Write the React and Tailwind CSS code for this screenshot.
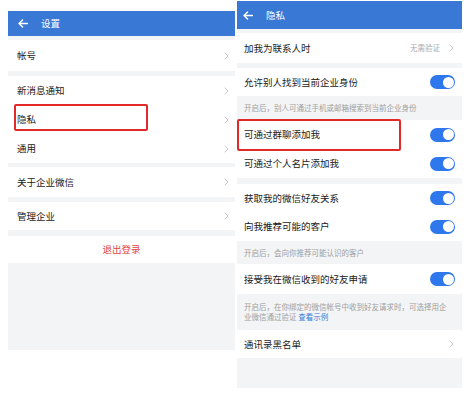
import React from "react";

const FONT = { fontFamily: '"Noto Sans CJK SC", "Noto Sans", sans-serif' };

function BackArrow() {
  return (
    <svg width="10" height="9" viewBox="0 0 10 9" fill="none">
      <path d="M9.5 4.5H1.2M4.6 1L1 4.5L4.6 8" stroke="white" strokeWidth="1.4" strokeLinecap="round" strokeLinejoin="round" />
    </svg>
  );
}

function Chevron() {
  return (
    <svg width="5" height="8" viewBox="0 0 5 8" fill="none">
      <path d="M1 1L4 4L1 7" stroke="#c7c7cc" strokeWidth="1" strokeLinecap="round" strokeLinejoin="round" />
    </svg>
  );
}

function Toggle() {
  return (
    <div className="w-[25px] h-[14px] rounded-full bg-[#2f77ec] flex items-center justify-end pr-[1.5px]">
      <div className="w-[11px] h-[11px] rounded-full bg-white" />
    </div>
  );
}

function Header({ title, pad }) {
  return (
    <div className={`bg-[#3a78d6] flex items-center ${pad}`}>
      <BackArrow />
      <span className="text-white text-[9.5px] ml-[13px]">{title}</span>
    </div>
  );
}

function NavRow({ label, h, pad = "pl-[9px] pr-[6px]", children }) {
  return (
    <div className={`relative bg-white flex items-center justify-between ${pad} ${h}`}>
      <span className="text-[9.5px] text-[#1a1a1a]">{label}</span>
      <Chevron />
      {children}
    </div>
  );
}

function Gap({ h }) {
  return <div className={`bg-[#f3f4f6] ${h}`} />;
}

function SwitchRow({ label, h }) {
  return (
    <div className={`relative bg-white flex items-center justify-between pl-[7px] pr-[7px] ${h}`}>
      <span className="text-[9.5px] text-[#1a1a1a]">{label}</span>
      <Toggle />
    </div>
  );
}

function Note({ h, children }) {
  return (
    <div className={`bg-[#f3f4f6] flex items-center pl-[7px] pr-[10px] text-[7.5px] leading-[10px] text-[#a0a0a0] ${h}`}>
      <div>{children}</div>
    </div>
  );
}

export default function App() {
  return (
    <div className="w-[474px] h-[409px] bg-white flex items-start overflow-hidden" style={FONT}>
      {/* settings screen */}
      <div className="ml-[8px] mt-[11px] w-[227px] flex flex-col">
        <Header title="设置" pad="h-[25px] pl-[10px]" />
        <Gap h="h-[4px]" />
        <NavRow label="帐号" h="h-[31px]" />
        <Gap h="h-[5px]" />
        <NavRow label="新消息通知" h="h-[29px]" />
        <NavRow label="隐私" h="h-[29px]">
          <div className="absolute z-10 left-[6px] top-[-1px] w-[134px] h-[27px] border-2 border-[#e3282a] rounded-[2px]" />
        </NavRow>
        <NavRow label="通用" h="h-[29px]" />
        <Gap h="h-[4px]" />
        <NavRow label="关于企业微信" h="h-[30px]" />
        <Gap h="h-[5px]" />
        <NavRow label="管理企业" h="h-[28px]" />
        <Gap h="h-[6px]" />
        <div className="bg-white h-[27px] flex items-center justify-center">
          <span className="text-[9.5px] text-[#e0443e]">退出登录</span>
        </div>
        <Gap h="h-[87px]" />
      </div>

      {/* privacy screen */}
      <div className="ml-[2px] mt-[1px] w-[225px] flex flex-col">
        <Header title="隐私" pad="h-[28px] pl-[6px]" />
        <Gap h="h-[4px]" />
        <div className="bg-white h-[30px] flex items-center justify-between pl-[7px] pr-[8px]">
          <span className="text-[9.5px] text-[#1a1a1a]">加我为联系人时</span>
          <div className="flex items-center gap-[9px]">
            <span className="text-[7.5px] text-[#aaa]">无需验证</span>
            <Chevron />
          </div>
        </div>
        <Gap h="h-[5px]" />
        <SwitchRow label="允许别人找到当前企业身份" h="h-[28px]" />
        <Note h="h-[24px]">开启后，别人可通过手机或邮箱搜索到当前企业身份</Note>
        <div className="relative">
          <SwitchRow label="可通过群聊添加我" h="h-[29px]" />
          <div className="absolute z-10 left-0 top-[-1px] w-[164px] h-[32px] border-2 border-[#e3282a] rounded-[2px]" />
        </div>
        <SwitchRow label="可通过个人名片添加我" h="h-[29px]" />
        <Gap h="h-[6px]" />
        <SwitchRow label="获取我的微信好友关系" h="h-[28px]" />
        <SwitchRow label="向我推荐可能的客户" h="h-[29px]" />
        <Note h="h-[23px]">开启后，会向你推荐可能认识的客户</Note>
        <SwitchRow label="接受我在微信收到的好友申请" h="h-[30px]" />
        <Note h="h-[36px]">
          开启后，在你绑定的微信帐号中收到好友请求时，可选择用企
          <br />
          业微信通过验证 <span className="text-[#3a78d6]">查看示例</span>
        </Note>
        <NavRow label="通讯录黑名单" h="h-[28px]" pad="pl-[7px] pr-[8px]" />
        <Gap h="h-[30px]" />
      </div>
    </div>
  );
}
